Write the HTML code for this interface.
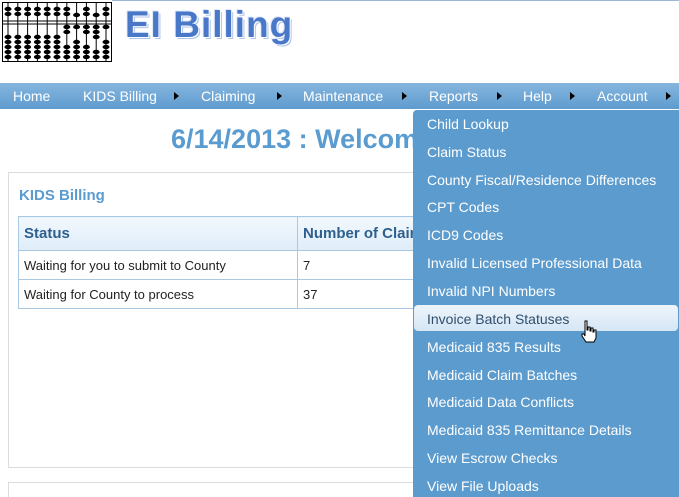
<!DOCTYPE html>
<html style="overflow:hidden;height:497px"><head><style>
body{margin:0;width:679px;height:497px;overflow:hidden;background:#fff;font-family:"Liberation Sans",sans-serif;position:relative}
.nav{position:absolute;left:0;top:83px;width:679px;height:26px;background:linear-gradient(#86b6de,#5e9bcf);}
.nav span{position:absolute;top:5px;color:#fff;font-size:14px}
.nav i{position:absolute;top:9px;width:0;height:0;border-left:5px solid #000;border-top:4px solid transparent;border-bottom:4px solid transparent}
.title{position:absolute;left:125px;top:4px;font-size:37px;font-weight:bold;color:#4a78c8;text-shadow:1px 1px 0 #fff,2px 2px 0 #b0c4e8,-1px -1px 0 #dfe8f8;letter-spacing:1px}
h1{position:absolute;left:171px;top:124px;margin:0;font-size:27px;color:#5a9bd0;font-weight:bold}
.panel{position:absolute;left:8px;border:1px solid #dcdcdc}
.kb{position:absolute;left:19px;top:187px;font-size:15px;font-weight:bold;color:#5a9bd0}
table{position:absolute;left:18px;top:216px;border-collapse:collapse;width:420px}
td,th{border:1px solid #a8c8e4;text-align:left;padding:0 5px}
th{height:33px;font-size:15px;color:#2f5f8e;background:linear-gradient(#f2f8fd,#deedf9);}
td{height:28px;font-size:13px;color:#222}
.menu{position:absolute;left:413px;top:110px;width:266px;height:387px;background:#5c9bcd;border-radius:4px 0 0 0}
.menu div{position:absolute;left:14px;color:#fff;font-size:14px}
.hl{position:absolute;left:1px;top:195px;width:264px;height:26px;background:linear-gradient(#eef5fb,#d5e6f5);border-radius:4px}
</style></head><body>
<svg style="position:absolute;left:2px;top:2px" width="110" height="60" viewBox="0 0 110 60">
<rect x="0.5" y="0.5" width="109" height="59" fill="#fff" stroke="#000"/>
<line x1="1" y1="19" x2="109" y2="19" stroke="#000" stroke-width="1"/>
<line x1="1" y1="22" x2="109" y2="22" stroke="#000" stroke-width="1"/>
<g stroke="#000" stroke-width="1">
<line x1="6" y1="1" x2="6" y2="59"/><line x1="15.8" y1="1" x2="15.8" y2="59"/><line x1="25.6" y1="1" x2="25.6" y2="59"/><line x1="35.4" y1="1" x2="35.4" y2="59"/><line x1="45.2" y1="1" x2="45.2" y2="59"/><line x1="55" y1="1" x2="55" y2="59"/><line x1="64.8" y1="1" x2="64.8" y2="59"/><line x1="74.6" y1="1" x2="74.6" y2="59"/><line x1="84.4" y1="1" x2="84.4" y2="59"/><line x1="94.2" y1="1" x2="94.2" y2="59"/><line x1="104" y1="1" x2="104" y2="59"/>
</g>
<g fill="#000">
<ellipse cx="6" cy="7" rx="3.5" ry="2.2"/><ellipse cx="15.8" cy="7" rx="3.5" ry="2.2"/><ellipse cx="25.6" cy="7" rx="3.5" ry="2.2"/><ellipse cx="35.4" cy="7" rx="3.5" ry="2.2"/><ellipse cx="45.2" cy="7" rx="3.5" ry="2.2"/><ellipse cx="55" cy="7" rx="3.5" ry="2.2"/><ellipse cx="64.8" cy="7" rx="3.5" ry="2.2"/><ellipse cx="74.6" cy="13" rx="3.5" ry="2.2"/><ellipse cx="84.4" cy="7" rx="3.5" ry="2.2"/><ellipse cx="94.2" cy="13" rx="3.5" ry="2.2"/><ellipse cx="104" cy="7" rx="3.5" ry="2.2"/>
<ellipse cx="6" cy="12" rx="3.5" ry="2.2"/><ellipse cx="15.8" cy="12" rx="3.5" ry="2.2"/><ellipse cx="25.6" cy="12" rx="3.5" ry="2.2"/><ellipse cx="35.4" cy="12" rx="3.5" ry="2.2"/><ellipse cx="45.2" cy="12" rx="3.5" ry="2.2"/><ellipse cx="55" cy="12" rx="3.5" ry="2.2"/><ellipse cx="64.8" cy="12" rx="3.5" ry="2.2"/><ellipse cx="84.4" cy="12" rx="3.5" ry="2.2"/><ellipse cx="104" cy="12" rx="3.5" ry="2.2"/>
</g>
<g fill="#000">
<g id="c"><ellipse cx="6" cy="35" rx="3.5" ry="2.2"/><ellipse cx="6" cy="40" rx="3.5" ry="2.2"/><ellipse cx="6" cy="45" rx="3.5" ry="2.2"/><ellipse cx="6" cy="50" rx="3.5" ry="2.2"/><ellipse cx="6" cy="55" rx="3.5" ry="2.2"/></g>
<use href="#c" x="9.8"/><use href="#c" x="19.6"/><use href="#c" x="29.4"/><use href="#c" x="39.2"/><use href="#c" x="49"/>
<g transform="translate(58.8,0)"><ellipse cx="6" cy="25" rx="3.5" ry="2.2"/><ellipse cx="6" cy="30" rx="3.5" ry="2.2"/><ellipse cx="6" cy="45" rx="3.5" ry="2.2"/><ellipse cx="6" cy="50" rx="3.5" ry="2.2"/><ellipse cx="6" cy="55" rx="3.5" ry="2.2"/></g>
<g transform="translate(68.6,0)"><ellipse cx="6" cy="25" rx="3.5" ry="2.2"/><ellipse cx="6" cy="40" rx="3.5" ry="2.2"/><ellipse cx="6" cy="45" rx="3.5" ry="2.2"/><ellipse cx="6" cy="50" rx="3.5" ry="2.2"/><ellipse cx="6" cy="55" rx="3.5" ry="2.2"/></g>
<g transform="translate(78.4,0)"><ellipse cx="6" cy="25" rx="3.5" ry="2.2"/><ellipse cx="6" cy="30" rx="3.5" ry="2.2"/><ellipse cx="6" cy="45" rx="3.5" ry="2.2"/><ellipse cx="6" cy="50" rx="3.5" ry="2.2"/><ellipse cx="6" cy="55" rx="3.5" ry="2.2"/></g>
<g transform="translate(88.2,0)"><ellipse cx="6" cy="25" rx="3.5" ry="2.2"/><ellipse cx="6" cy="30" rx="3.5" ry="2.2"/><ellipse cx="6" cy="35" rx="3.5" ry="2.2"/><ellipse cx="6" cy="50" rx="3.5" ry="2.2"/><ellipse cx="6" cy="55" rx="3.5" ry="2.2"/></g>
<g transform="translate(98,0)"><ellipse cx="6" cy="25" rx="3.5" ry="2.2"/><ellipse cx="6" cy="40" rx="3.5" ry="2.2"/><ellipse cx="6" cy="45" rx="3.5" ry="2.2"/><ellipse cx="6" cy="50" rx="3.5" ry="2.2"/><ellipse cx="6" cy="55" rx="3.5" ry="2.2"/></g>
</g>
</svg>
<div class="title">EI Billing</div>
<div style="position:absolute;left:112px;top:0;width:567px;height:1px;background:#9bb8d8"></div>
<div class="nav">
<span style="left:13px">Home</span>
<span style="left:83px">KIDS Billing</span><i style="left:174px"></i>
<span style="left:201px">Claiming</span><i style="left:277px"></i>
<span style="left:303px">Maintenance</span><i style="left:402px"></i>
<span style="left:429px">Reports</span><i style="left:497px"></i>
<span style="left:523px">Help</span><i style="left:570px"></i>
<span style="left:597px">Account</span><i style="left:666px"></i>
</div>
<h1>6/14/2013 : Welcome</h1>
<div class="panel" style="top:172px;width:460px;height:294px"></div>
<div class="panel" style="top:482px;width:460px;height:30px"></div>
<div class="kb">KIDS Billing</div>
<table>
<tr><th style="width:268px">Status</th><th>Number of Claims</th></tr>
<tr><td>Waiting for you to submit to County</td><td>7</td></tr>
<tr><td>Waiting for County to process</td><td>37</td></tr>
</table>
<div class="menu">
<div class="hl" style="left:1px"></div>
<div style="top:6px">Child Lookup</div>
<div style="top:34px">Claim Status</div>
<div style="top:62px">County Fiscal/Residence Differences</div>
<div style="top:89px">CPT Codes</div>
<div style="top:117px">ICD9 Codes</div>
<div style="top:145px">Invalid Licensed Professional Data</div>
<div style="top:173px">Invalid NPI Numbers</div>
<div style="top:201px;color:#2f4f6e">Invoice Batch Statuses</div>
<div style="top:229px">Medicaid 835 Results</div>
<div style="top:257px">Medicaid Claim Batches</div>
<div style="top:284px">Medicaid Data Conflicts</div>
<div style="top:312px">Medicaid 835 Remittance Details</div>
<div style="top:340px">View Escrow Checks</div>
<div style="top:368px">View File Uploads</div>
</div>
<svg style="position:absolute;left:580px;top:320px" width="18" height="24" viewBox="0 0 18 24"><path d="M5 1h2v9h1V7h2v4h1V8h2v4h1v-2h2v8l-2 4H6l-4-6v-2h2l1 2z" fill="#fff" stroke="#000" stroke-width="1"/></svg>
</body></html>
